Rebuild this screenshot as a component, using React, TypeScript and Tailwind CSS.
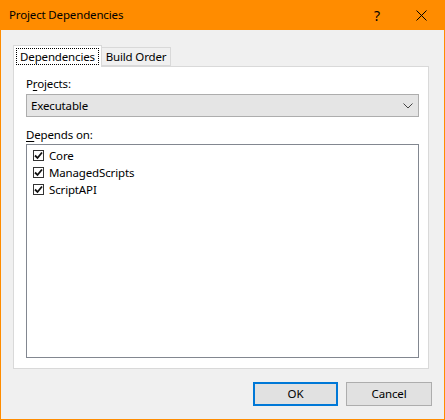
import { useState } from 'react';

const projects = ['Core', 'ManagedScripts', 'ScriptAPI'];

function CheckBox({ checked }: { checked: boolean }) {
  return (
    <span className="flex h-[11px] w-[11px] items-center justify-center border border-[#333] bg-white">
      {checked && (
        <svg width="9" height="9" viewBox="0 0 9 9">
          <path d="M1 4.5 L3.5 7 L8 1.5" fill="none" stroke="#111" strokeWidth="1.8" />
        </svg>
      )}
    </span>
  );
}

export default function App() {
  const [checked] = useState<Record<string, boolean>>({
    Core: true,
    ManagedScripts: true,
    ScriptAPI: true,
  });

  return (
    <div className="flex h-[420px] w-[445px] flex-col border border-t-0 border-[#ff8c00] bg-[#f0f0f0] font-['Noto_Sans',sans-serif] text-[11.5px] tracking-[-0.15px] text-black">
      {/* Title bar */}
      <div className="-mx-px flex h-[30px] shrink-0 items-center bg-[#ff8c00] pl-[9px]">
        <span className="flex-1">Project Dependencies</span>
        <span className="mr-[36px] text-[14px]">?</span>
        <svg width="11" height="11" viewBox="0 0 11 11" className="mr-[18px]">
          <path d="M0.5 0.5 L10.5 10.5 M10.5 0.5 L0.5 10.5" stroke="#000" strokeWidth="1" />
        </svg>
      </div>

      <div className="flex flex-1 flex-col px-[12px] pt-[15px]">
        {/* Tabs */}
        <div className="relative z-10 flex h-[21px] items-start">
          <div className="flex h-[22px] w-[89px] items-start border border-b-0 border-[#d9d9d9] bg-white px-[2px] pt-[2px]">
            <span className="flex h-[17px] w-full items-center justify-center border border-dotted border-black leading-none">
              Dependencies
            </span>
          </div>
          <div className="mt-[2px] flex h-[19px] w-[69px] items-center justify-center border border-l-0 border-[#d9d9d9] bg-[#f0f0f0] pt-[1px]">
            Build Order
          </div>
        </div>

        {/* Tab page */}
        <div className="flex h-[303px] w-[416px] flex-col border border-[#d9d9d9] bg-white pl-[12px] pr-[9px] pt-[8px]">
          <div className="h-[18px] leading-[18px]">
            P<span className="underline underline-offset-2">r</span>ojects:
          </div>
          <div className="mt-[1px] flex h-[23px] items-center justify-between border border-[#adadad] bg-[#e5e5e5] pl-[4px] pr-[5px]">
            <span>Executable</span>
            <svg width="10" height="6" viewBox="0 0 10 6">
              <path d="M0.5 0.5 L5 5 L9.5 0.5" fill="none" stroke="#444" strokeWidth="1" />
            </svg>
          </div>
          <div className="mt-[9px] h-[18px] leading-[18px]">
            <span className="underline underline-offset-2">D</span>epends on:
          </div>
          <div className="mt-0 flex h-[214px] flex-col border border-[#828790] bg-white pt-[2px]">
            {projects.map((p) => (
              <div key={p} className="flex h-[17px] items-center gap-[5px] pl-[6px]">
                <CheckBox checked={checked[p]} />
                <span>{p}</span>
              </div>
            ))}
          </div>
        </div>

        {/* Buttons */}
        <div className="mt-[13px] flex justify-end gap-[8px]">
          <button className="h-[24px] w-[85px] border-2 border-[#0078d7] bg-[#e1e1e1]">OK</button>
          <button className="h-[24px] w-[86px] border border-[#adadad] bg-[#e1e1e1]">Cancel</button>
        </div>
      </div>
    </div>
  );
}
